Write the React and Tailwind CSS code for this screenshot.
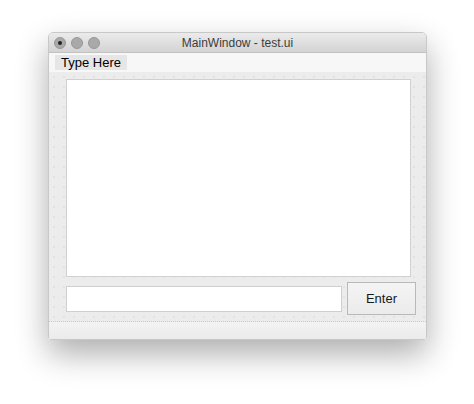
import React from 'react';

export default function App() {
  return (
    <div className="w-[474px] h-[404px] bg-white overflow-hidden font-['Liberation_Sans',Arial,sans-serif]">
      {/* Window */}
      <div className="ml-[48px] mt-[32px] w-[379px] h-[308px] flex flex-col rounded-t-[5px] rounded-b-[3px] overflow-hidden border border-[#c8c8c8] shadow-[0_14px_32px_rgba(0,0,0,0.32)]">
        {/* Title bar */}
        <div className="relative h-[20px] shrink-0 flex items-center bg-gradient-to-b from-[#ebebeb] to-[#d3d3d3] border-b border-[#c2c2c2]">
          <div className="flex items-center gap-[5px] pl-[5px]">
            <div className="w-[12px] h-[12px] rounded-full bg-[#a9a9a9] border border-[#989898] flex items-center justify-center">
              <div className="w-[4px] h-[4px] rounded-full bg-[#222222]" />
            </div>
            <div className="w-[12px] h-[12px] rounded-full bg-[#a9a9a9] border border-[#989898]" />
            <div className="w-[12px] h-[12px] rounded-full bg-[#a9a9a9] border border-[#989898]" />
          </div>
          <div className="absolute inset-0 flex items-center justify-center text-[12px] text-[#3c3c3c]">
            MainWindow - test.ui
          </div>
        </div>

        {/* Menu bar */}
        <div className="h-[19px] shrink-0 flex items-center bg-[#f7f7f7] pl-[6px]">
          <div className="h-[15px] px-[6px] flex items-center bg-[#e6e6e6] text-[13px] text-black">
            Type Here
          </div>
        </div>

        {/* Central widget */}
        <div className="flex-1 flex flex-col bg-[#ececec] bg-[radial-gradient(#d6d6d6_0.6px,transparent_0.8px)] bg-[length:10px_10px] pl-[17px] pr-[15px] pt-[7px]">
          <div className="h-[198px] bg-white border border-[#d0d0d0]" />
          <div className="mt-[5px] flex items-center">
            <div className="w-[276px] h-[26px] bg-white border border-[#cfcfcf]" />
            <div className="ml-[5px] -mr-[5px] w-[69px] h-[33px] flex items-center justify-center bg-gradient-to-b from-[#f4f4f4] to-[#ebebeb] border border-[#b9b9b9] text-[13px] text-[#1a1a1a]">
              Enter
            </div>
          </div>
        </div>

        {/* Status bar */}
        <div className="h-[18px] shrink-0 bg-gradient-to-b from-[#f3f3f3] to-[#ebebeb] border-t border-dotted border-[#c9c9c9]" />
      </div>
    </div>
  );
}
